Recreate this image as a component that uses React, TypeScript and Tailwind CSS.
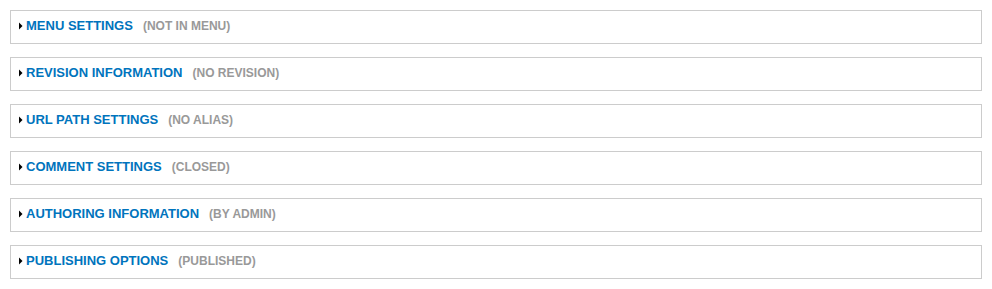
import React from "react";

const items = [
  ["Menu settings", "(Not in menu)"],
  ["Revision information", "(No revision)"],
  ["URL path settings", "(No alias)"],
  ["Comment settings", "(Closed)"],
  ["Authoring information", "(By admin)"],
  ["Publishing options", "(Published)"],
];

export default function App() {
  return (
    <div className="bg-white w-[992px] h-[289px] px-[10px] pt-[10px] flex flex-col gap-[13px]" style={{ fontFamily: '"Liberation Sans", Arial, sans-serif' }}>
      {items.map(([t, s]) => (
        <div key={t} className="h-[34px] border border-[#cccccc] flex items-center pl-[7px] pb-[2px] w-[972px]">
          <svg width="5" height="8" viewBox="0 0 5 8" className="mr-[3px]">
            <path d="M1 0.5 L4.5 4 L1 7.5 Z" fill="#000" />
          </svg>
          <span className="text-[13px] font-bold uppercase text-[#0074bd]">{t}</span>
          <span className="ml-[10px] text-[12px] font-bold uppercase text-[#999999]">{s}</span>
        </div>
      ))}
    </div>
  );
}
